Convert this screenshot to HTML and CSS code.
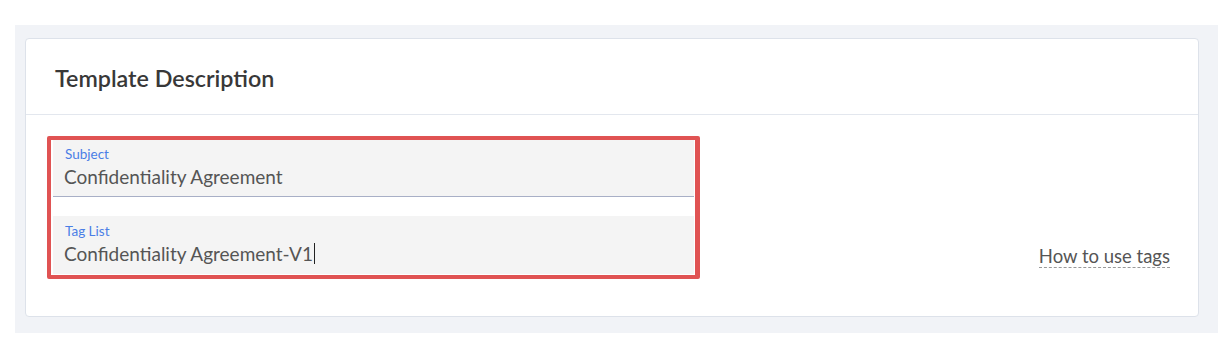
FILE: index.html
```html
<!DOCTYPE html>
<html>
<head>
<meta charset="utf-8">
<link rel="stylesheet" href="styles.css">
</head>
<body>
<div class="page">
  <div class="card">
    <div class="card-header">
      <h2 class="card-title">Template Description</h2>
    </div>
    <div class="card-body">
      <div class="form-box">
        <div class="field field-underlined">
          <span class="field-label">Subject</span>
          <span class="field-value">Confidentiality Agreement</span>
        </div>
        <div class="field field-tags">
          <span class="field-label">Tag List</span>
          <span class="field-value">Confidentiality Agreement-V1<span class="caret"></span></span>
        </div>
      </div>
      <a class="help-link">How to use tags</a>
    </div>
  </div>
</div>
</body>
</html>
```
FILE: styles.css
```css
* { box-sizing: border-box; }
html, body { margin: 0; padding: 0; background: #ffffff; }
body { font-family: Lato, "Open Sans", sans-serif; color: #555; }

.page {
  margin: 25px 0 0 15px;
  width: 1203px;
  height: 308px;
  background: #f1f3f7;
  padding: 13px 19px 16px 10px;
}

.card {
  height: 279px;
  background: #fff;
  border: 1px solid #dde2ea;
  border-radius: 4px;
  display: flex;
  flex-direction: column;
}

.card-header {
  height: 76px;
  border-bottom: 1px solid #e3e7ee;
  display: flex;
  align-items: center;
  padding-left: 29px;
  padding-top: 3px;
}

.card-title {
  margin: 0;
  font-size: 23.3px;
  font-weight: 600;
  color: #383838;
}

.card-body {
  flex: 1;
  display: flex;
  justify-content: space-between;
  align-items: flex-end;
  padding: 21px 28px 37px 21px;
}

.form-box {
  width: 653px;
  height: 143px;
  border: 4px solid #e05353;
  border-right-width: 5px;
  border-radius: 2px;
  padding: 0 1px 1px 2px;
  display: flex;
  flex-direction: column;
}

.field {
  background: #f4f4f4;
  display: flex;
  flex-direction: column;
  padding-left: 11px;
}

.field-underlined {
  height: 57px;
  border-bottom: 1px solid #a8afc6;
  padding-top: 6px;
}

.field-tags {
  margin-top: 19px;
  flex: 1;
  padding-top: 7px;
}

.field-label {
  font-size: 13.5px;
  color: #4a7ee6;
  line-height: 17px;
  padding-left: 1px;
}

.field-value {
  font-size: 19px;
  line-height: 27px;
  color: #555;
  display: flex;
  align-items: center;
}

.caret {
  display: inline-block;
  width: 1px;
  height: 21px;
  background: #222;
  margin-left: 1px;
}

.help-link {
  font-size: 18.5px;
  color: #555;
  line-height: 22px;
  border-bottom: 1px dashed #999;
  margin-bottom: 11px;
  cursor: pointer;
}
```
